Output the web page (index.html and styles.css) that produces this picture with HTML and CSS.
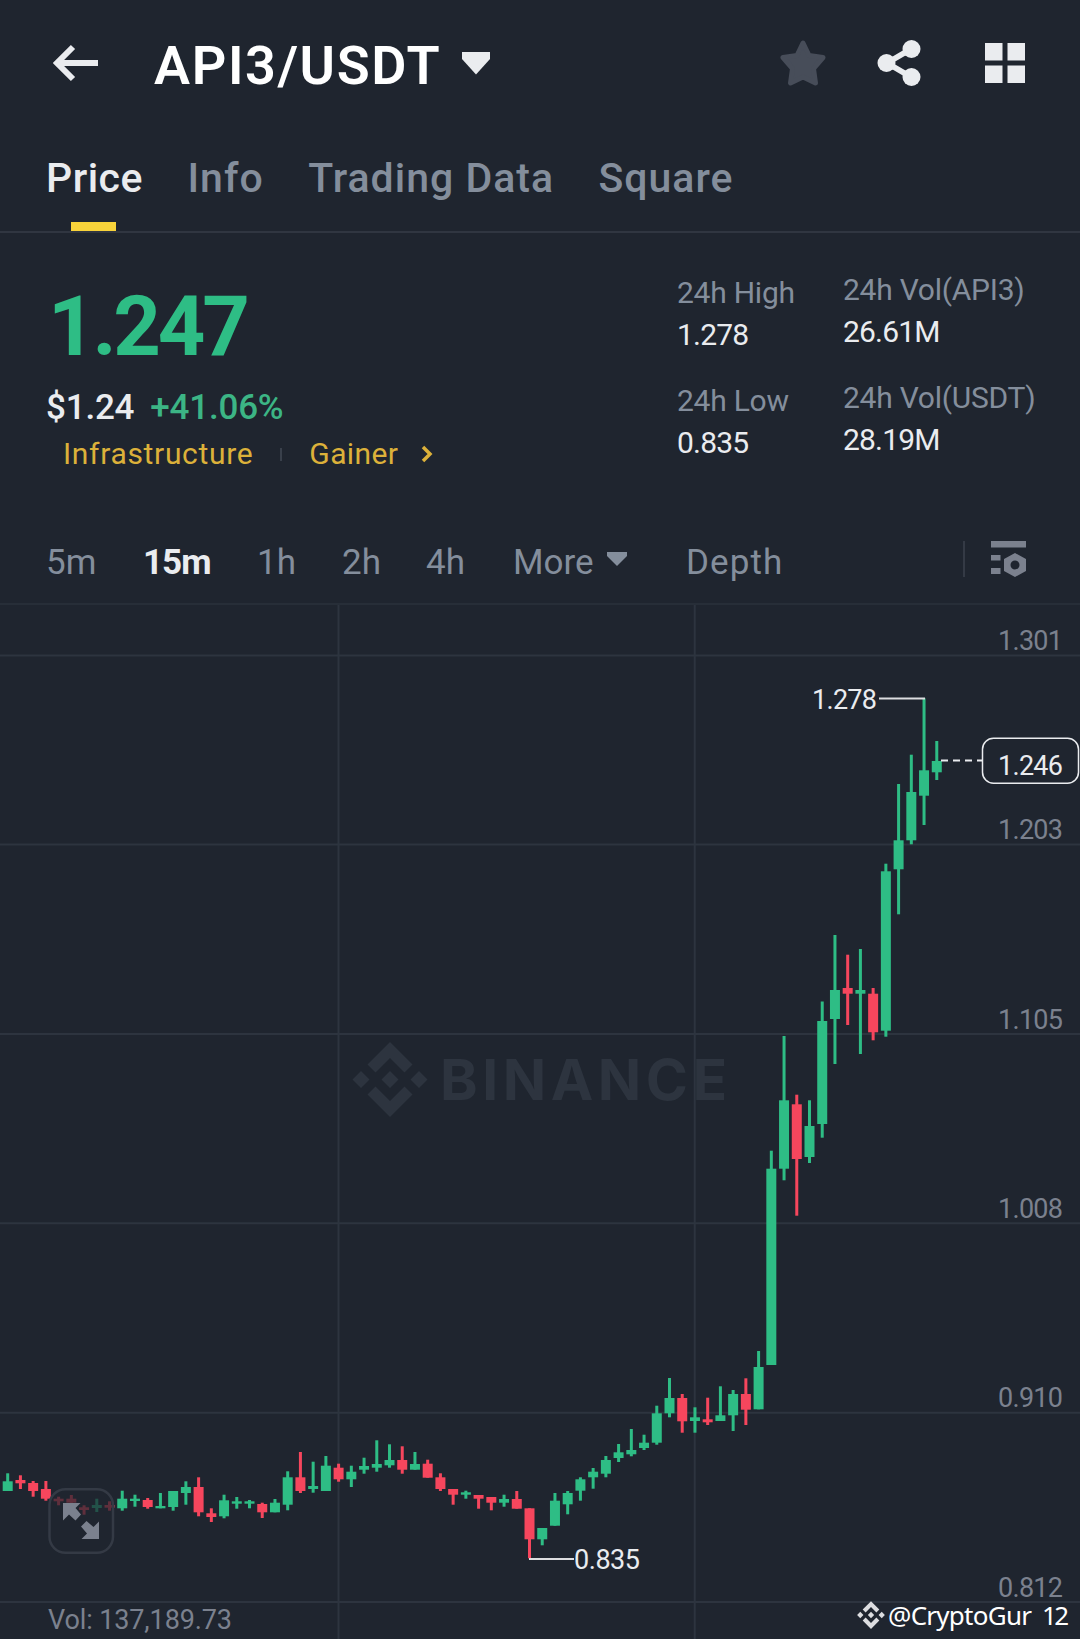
FILE: index.html
```html
<!DOCTYPE html>
<html lang="en">
<head>
    <meta charset="UTF-8">
    <meta name="viewport" content="width=device-width, initial-scale=1.0">
    <title>API3/USDT</title>
    <link rel="stylesheet" href="styles.css">
</head>
<body>
    <header class="header">
        <svg class="back" width="46" height="38" viewBox="0 0 46 38">
            <path d="M45 19H5M20 3L4 19L20 35" fill="none" stroke="#eaecef" stroke-width="6"/>
        </svg>
        <h1 class="pair">API3/USDT</h1>
        <svg class="pair-caret" width="28" height="23" viewBox="0 0 28 23">
            <path d="M0 0H28V7L14 22.5L0 7Z" fill="#eaecef"/>
        </svg>
        <div class="actions">
            <svg width="46" height="48" viewBox="0 0 46 48">
                <path d="M23 4L29 16.5L43 18.5L33.5 29.5L35.500 44L23 38L10.500 44L12.500 29.500L3 18.500L17 16.500Z" fill="#474d59" stroke="#474d59" stroke-width="5" stroke-linejoin="round"/>
            </svg>
            <svg width="44" height="48" viewBox="0 0 44 48">
                <path d="M34 10L10 24L34 38" fill="none" stroke="#eaecef" stroke-width="5.500"/>
                <circle cx="34.500" cy="10" r="9" fill="#eaecef"/>
                <circle cx="9.500" cy="24" r="9" fill="#eaecef"/>
                <circle cx="34.500" cy="38" r="9" fill="#eaecef"/>
            </svg>
            <svg width="40" height="40" viewBox="0 0 40 40">
                <path d="M0 0H17.500V17.500H0ZM22.500 0H40V17.500H22.500ZM0 22.500H17.500V40H0ZM22.500 22.500H40V40H22.500Z" fill="#eaecef"/>
            </svg>
        </div>
    </header>

    <nav class="tabs">
        <div class="tab active">Price</div>
        <div class="tab">Info</div>
        <div class="tab">Trading Data</div>
        <div class="tab">Square</div>
    </nav>

    <div class="summary">
        <div class="left">
            <div class="price">1.247</div>
            <div class="change"><span class="usd">$1.24</span><span class="percent">+41.06%</span></div>
            <div class="tags">
                <span class="tag-infra">Infrastructure</span>
                <span class="tag-sep"></span>
                <span class="tag-gainer">Gainer</span>
                <svg width="12" height="18" viewBox="0 0 12 18">
                    <path d="M2 2L9 9L2 16" fill="none" stroke="#dcb13a" stroke-width="3.500"/>
                </svg>
            </div>
        </div>
        <div class="stats">
            <div class="stat-col">
                <div class="label">24h High</div>
                <div class="value">1.278</div>
                <div class="label">24h Low</div>
                <div class="value">0.835</div>
            </div>
            <div class="stat-col vol">
                <div class="label">24h Vol(API3)</div>
                <div class="value">26.61M</div>
                <div class="label">24h Vol(USDT)</div>
                <div class="value">28.19M</div>
            </div>
        </div>
    </div>

    <div class="intervals">
        <span class="m5">5m</span>
        <span class="m15 active">15m</span>
        <span class="h1">1h</span>
        <span class="h2">2h</span>
        <span class="h4">4h</span>
        <span class="more">More</span>
        <svg class="more-caret" width="20" height="14" viewBox="0 0 20 14">
            <path d="M0 0H20V4L10 14L0 4Z" fill="#848e9c"/>
        </svg>
        <span class="depth">Depth</span>
        <div class="settings">
            <svg width="35" height="36" viewBox="0 0 35 36" fill="#7b818e">
                <path d="M0 0H35V6.500H0ZM0 14H9.500V19.500H0ZM0 27H9.500V33H0Z"/>
                <path fill-rule="evenodd" d="M24 12L35 18V30L24 36L13 30V18ZM24 19.500A4.500 4.500 0 1 0 24 28.500A4.500 4.500 0 1 0 24 19.500Z"/>
            </svg>
        </div>
    </div>

    <svg class="chart" width="1080" height="1034" viewBox="0 605 1080 1034">
        <defs>
            <g id="logo">
                <path d="M-22.500 -15L0 -37.500L22.500 -15L14.500 -7L0 -21.500L-14.500 -7ZM-22.500 15L0 37.500L22.500 15L14.500 7L0 21.500L-14.500 7ZM-37.500 0L-29 -8.500L-20.500 0L-29 8.500ZM37.500 0L29 -8.500L20.500 0L29 8.500ZM0 -8.500L8.500 0L0 8.500L-8.500 0Z"/>
            </g>
        </defs>
        <use href="#logo" x="390" y="1079.500" fill="#2d343f"/>
        <text class="watermark" x="440" y="1100" textLength="287">BINANCE</text>
        <g id="grid"></g>
        <g id="candles"></g>

        <!-- high / low marks -->
        <path class="mark" d="M879 698.500H925M529 1559H574"/>
        <text class="mark-text" x="812" y="709" textLength="65">1.278</text>
        <text class="mark-text" x="574" y="1568.500" textLength="66">0.835</text>

        <!-- last price -->
        <path class="last" d="M941 760.500H982"/>
        <rect class="last-box" x="982.500" y="738.300" width="96" height="45" rx="11"/>
        <text class="mark-text" x="998" y="774.500" textLength="65">1.246</text>

        <!-- fullscreen button -->
        <rect class="expand" x="49.500" y="1489.300" width="63.500" height="63.500" rx="16"/>
        <path d="M63 1503H80.500L75.500 1508L81 1514.500L75.500 1520.500L69 1514.500L63 1520.500ZM99 1539H81.500L87 1533.500L81 1526.500L86.500 1521L93.500 1527L99 1521.500Z" fill="#7b818e"/>

        <text class="axis" x="48" y="1629" textLength="184">Vol: 137,189.73</text>

        <use href="#logo" transform="translate(871 1615) scale(.370)" fill="#dcdde0"/>
        <text class="author" x="888" y="1624.500" textLength="144">@CryptoGur</text>
        <text class="author" x="1042" y="1624.500" textLength="27">12</text>
    </svg>

    <script>
        // [up, high, body top, body bottom, low]
        const candles = [
            [1,1473.3,1481.3,1491,1491],[0,1475.3,1480,1483.3,1489],[0,1481,1483,1491,1496.7],[0,1481,1489,1498.7,1500.7],
            [0,1496.7,1498.7,1501.3,1505.3],[0,1495,1498.7,1502.7,1503.3],[0,1505.3,1507.3,1510,1514.7],[1,1498.7,1505,1508,1512],
            [0,1501.3,1505,1507.7,1510.7],[1,1490.7,1498.7,1508.3,1510.7],[1,1494.7,1498.7,1501,1506.7],[0,1498,1500,1507,1508.7],
            [1,1493,1506,1508.3,1508.3],[1,1491,1491,1507,1510.7],[1,1481.3,1487,1493,1504.7],[0,1477.3,1487,1512.3,1516.3],
            [0,1508.3,1513.3,1517,1522],[1,1494.7,1500.3,1516.3,1518.3],[1,1497,1501.3,1503.7,1508.7],[1,1500,1501.3,1503.7,1508.3],
            [0,1502.7,1504,1512.3,1518],[1,1499,1502.7,1512.3,1512.3],[1,1471.3,1477.3,1504.7,1510.3],[0,1452,1477.3,1491,1493],
            [1,1461.7,1486,1489,1492.7],[1,1456,1465.7,1491,1491],[0,1463.7,1467.7,1479.3,1481.7],[1,1465.7,1471.7,1479.3,1487],
            [1,1457.7,1466,1469.7,1473.7],[1,1440.3,1464,1467.7,1471.7],[1,1444.3,1460,1465.3,1467.7],[0,1446.3,1460,1469.7,1473.7],
            [1,1452,1464,1469.7,1469.7],[0,1459.7,1463.7,1477.7,1477.7],[0,1473.3,1477.3,1489,1491],[0,1489,1489,1494.7,1504.7],
            [1,1490.7,1492.3,1494.7,1498.7],[0,1495,1495,1498.7,1508.7],[0,1497,1497,1502.7,1510.3],[1,1494.7,1499,1502.7,1506.7],
            [0,1491,1499,1508.7,1508.7],[0,1508.3,1508.3,1539.3,1558.3],[1,1528,1528,1539.3,1545.3],[1,1493,1500.7,1525.7,1525.7],
            [1,1491,1493,1504.3,1514.3],[1,1477.3,1479.3,1490.7,1500.7],[1,1468,1471.7,1477.3,1488.7],[1,1456,1460,1473.7,1477.3],
            [1,1444,1452.3,1458,1462],[1,1429,1450,1454.3,1456.3],[1,1434.7,1442.7,1448,1450],[1,1405.7,1413.3,1442.7,1444.7],
            [1,1378,1398,1413.3,1417.3],[0,1394,1398,1421.3,1432.7],[1,1407.3,1417.3,1421,1432.7],[0,1397.7,1419.3,1422.3,1425],
            [1,1386.3,1415.3,1421,1421],[1,1390,1394,1415.3,1431],[0,1378.3,1394,1409.7,1425],[1,1351,1367,1409.3,1409.3],
            [1,1150.7,1168.7,1365,1365],[1,1036,1100.3,1168.7,1180.3],[0,1094.7,1104.3,1159,1215.7],[1,1100.3,1126,1157,1163],
            [1,1001.5,1021,1124,1137.7],[1,935,990,1019,1064],[0,954.7,988,993.7,1025],[1,949,990,993.7,1054],
            [0,988,993.7,1032.3,1040.3],[1,863.7,871.3,1030.7,1036.7],[1,784,840.3,869.3,914.3],[1,754.7,792,840.3,844.3],
            [1,698.3,770.3,795.7,825],[1,741,761,772.3,780]
        ];
        const levels = [[655.5,'1.301'],[844.5,'1.203'],[1034,'1.105'],[1223.3,'1.008'],[1412.7,'0.910'],[1602,'0.812']];

        let grid = '<path class="grid" d="M338.500 605V1639M694.700 605V1639"/>';
        levels.forEach(([y, text]) => {
            grid += `<path class="grid" d="M0 ${y}H1080"/><text class="axis" x="998" y="${y - 5.5}" textLength="65">${text}</text>`;
        });
        document.getElementById('grid').innerHTML = grid;

        let str = '';
        candles.forEach(([up, high, top, bottom, low], i) => {
            const x = 7.7 + i * 12.727;
            str += `<g class="${up ? 'up' : 'down'}">
                <rect x="${x - 1.5}" y="${high}" width="3" height="${low - high}"/>
                <rect x="${x - 5}" y="${top}" width="10" height="${bottom - top}"/>
            </g>`;
        });
        document.getElementById('candles').innerHTML = str;
    </script>
</body>
</html>
```
FILE: styles.css
```css
*{
    margin: 0;
    padding: 0;
    box-sizing: border-box;
}
body{
    width: 1080px;
    height: 1639px;
    overflow: hidden;
    background-color: #1f252f;
    color: #eaecef;
    font-family: Roboto, "Liberation Sans", sans-serif;
}
svg{
    display: block;
    flex: none;
}
.header{
    display: flex;
    align-items: center;
    height: 126px;
    padding: 0 55px 0 53px;
}
.pair{
    width: 308px;
    margin-left: 55px;
    padding-top: 5px;
    font-size: 54px;
    font-weight: 600;
    letter-spacing: 1.6px;
    color: #fff;
}
.actions{
    display: flex;
    align-items: center;
    margin-left: auto;
}
.actions svg:nth-child(2){
    margin: 0 64px 0 51px;
}

.tabs{
    display: flex;
    gap: 44.5px;
    height: 107px;
    padding-left: 46px;
    border-bottom: 2px solid #303641;
    font-size: 41px;
    font-weight: 500;
    line-height: 105px;
    letter-spacing: 1px;
    color: #848e9c;
}
.tab{
    position: relative;
}
.tab.active{
    letter-spacing: 0.5px;
    color: #eaecef;
}
.tab.active::after{
    content: "";
    position: absolute;
    left: 25px;
    bottom: 0;
    width: 45px;
    height: 9px;
    background-color: #f8d33a;
}

.summary{
    display: flex;
    justify-content: space-between;
    height: 287px;
    padding-left: 46px;
}
.price{
    margin-top: 54px;
    padding-left: 2px;
    font-size: 83px;
    font-weight: 700;
    line-height: 80px;
    letter-spacing: -3.2px;
    color: #2ebd85;
}
.change{
    display: flex;
    gap: 16px;
    margin-top: 19px;
    font-size: 35px;
    font-weight: 500;
    line-height: 44px;
    letter-spacing: -0.2px;
}
.percent{
    color: #3cb585;
}
.tags{
    display: flex;
    align-items: center;
    margin: 2px 0 0 17px;
    font-size: 30px;
    line-height: 44px;
    color: #dcb13a;
}
.tag-infra{
    letter-spacing: 0.67px;
}
.tag-sep{
    width: 2px;
    height: 13px;
    margin: 0 27px;
    background-color: #39404b;
}
.tag-gainer{
    margin-right: 23px;
    letter-spacing: 0.4px;
}
.stats{
    display: flex;
    width: 403px;
    padding-top: 39px;
    font-size: 30px;
    line-height: 42px;
}
.stat-col{
    width: 166px;
    white-space: nowrap;
}
.stat-col.vol{
    margin-top: -3px;
}
.label{
    letter-spacing: -0.25px;
    color: #848e9c;
}
.value{
    margin-bottom: 24px;
    letter-spacing: -0.8px;
}

.intervals{
    display: flex;
    align-items: center;
    height: 85px;
    padding: 0 54px 0 46px;
    border-bottom: 2px solid #272e38;
    font-size: 35px;
    line-height: 83px;
    color: #848e9c;
}
.intervals span{
    flex: none;
    padding-top: 1px;
}
.intervals .active{
    font-weight: 700;
    letter-spacing: -1px;
    color: #eaecef;
}
.m5{
    width: 97px;
}
.m15{
    width: 114px;
}
.h1{
    width: 85px;
}
.h2{
    width: 84px;
}
.h4{
    width: 87px;
}
.more{
    width: 94px;
}
.more-caret{
    margin: 0 59px 6px 0;
}
.depth{
    letter-spacing: 1.1px;
}
.settings{
    margin: 0 0 5px auto;
    padding-left: 26px;
    border-left: 2px solid #343a45;
}

.grid{
    fill: none;
    stroke: #2d343f;
    stroke-width: 2;
}
.axis{
    font-size: 27px;
    fill: #7b818e;
}
.up{
    fill: #2ebd85;
}
.down{
    fill: #f6465d;
}
.mark{
    stroke: #dcdde0;
    stroke-width: 2;
}
.mark-text{
    font-size: 27px;
    fill: #eaecef;
}
.last{
    stroke: #eaecef;
    stroke-width: 1.8;
    stroke-dasharray: 7 5;
}
.last-box{
    fill: #1f252f;
    stroke: #eaecef;
    stroke-width: 1.5;
}
.expand{
    fill: #1f252f;
    fill-opacity: .7;
    stroke: #343a45;
    stroke-width: 2.5;
}
.watermark{
    font-family: Inter, sans-serif;
    font-size: 57px;
    font-weight: 700;
    fill: #2d343f;
}
.author{
    font-family: "Noto Sans", sans-serif;
    font-size: 26px;
    fill: #fff;
}
```
